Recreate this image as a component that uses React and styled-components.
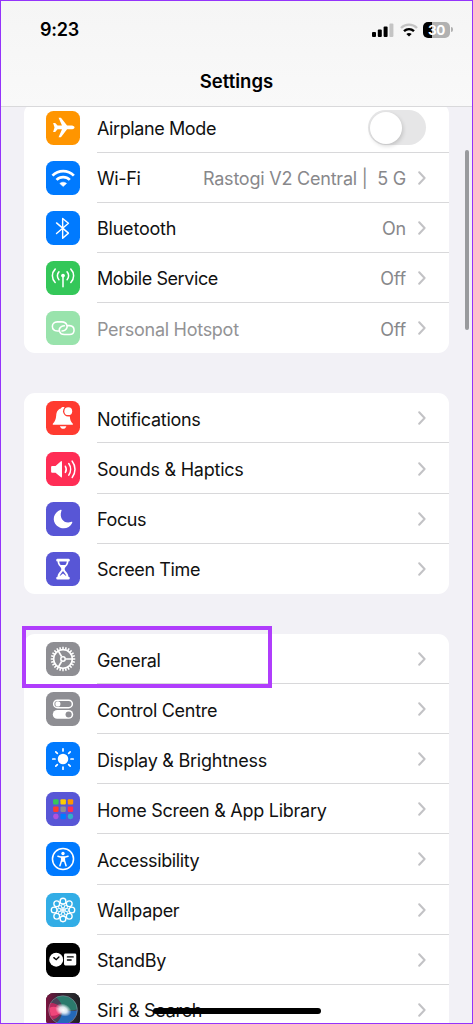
import React from 'react';
import styled, { createGlobalStyle } from 'styled-components';

const polar = (angle, radius, cx = 50, cy = 50) => {
  const a = (angle * Math.PI) / 180;
  return [cx + radius * Math.cos(a), cy + radius * Math.sin(a)];
};

const Ray = ({ angle, from, to, ...rest }) => {
  const [x1, y1] = polar(angle, from);
  const [x2, y2] = polar(angle, to);
  return <line x1={x1} y1={y1} x2={x2} y2={y2} {...rest} />;
};

const range = (n) => Array.from({ length: n }, (_, i) => i);

const icons = {
  airplane: (
    <path
      fill='#fff'
      d='M84 48.500C84 52 78 54 73 54H62L44 77H37L47 54H34L27 62H21L25 48.500L21 35H27L34 43H47L37 20H44L62 43H73C78 43 84 45 84 48.500Z'
    />
  ),
  wifi: (
    <g fill='none' stroke='#fff' strokeWidth='8'>
      <path d='M19 43C37 25 64 25 82 43' />
      <path d='M31 55.500C42 44.500 59 44.500 70 55.500' />
      <path
        d='M50.500 75L40.500 66C46 61 55 61 60.500 66Z'
        fill='#fff'
        stroke='#fff'
        strokeWidth='1.500'
      />
    </g>
  ),
  bluetooth: (
    <path
      d='M31 35L66 65L49 80V22L66 36L31 66'
      fill='none'
      stroke='#fff'
      strokeWidth='4.200'
      strokeLinejoin='round'
      strokeLinecap='round'
    />
  ),
  mobile: (
    <g fill='none' stroke='#fff' strokeWidth='4.500' strokeLinecap='round'>
      <circle cx='50' cy='43' r='5.500' fill='#fff' stroke='none' />
      <path d='M50 45V76' />
      <path d='M38 32C32 38 32 49 38 55M62 32C68 38 68 49 62 55' />
      <path d='M27 24C16 35 16 52 27 63M73 24C84 35 84 52 73 63' />
    </g>
  ),
  hotspot: (
    <g fill='none' stroke='#fff' strokeWidth='4.500' strokeLinecap='round'>
      <path d='M38 59H33C14 58 14 32 33 32H47C62 32 67 49 56 56C53 58 50 58.500 47 58.500' />
      <path d='M63 43H69C87 44 87 69 69 69H54C39 69 34 53 45 46C48 44 51 43.500 54 43.500' />
    </g>
  ),
  bell: (
    <g fill='#fff'>
      <path d='M20 70V67C27 60 29 54 30 43C31 30 36 24 44 22C45 17 54 16 56 21L60 43L70 45C71 56 73 61 79 67V70Z' />
      <path d='M41 74H60C57 84 44 84 41 74Z' />
      <circle cx='65.500' cy='30' r='15.500' fill='#ff3b30' />
      <circle cx='65.500' cy='30' r='11.500' />
    </g>
  ),
  sound: (
    <g fill='none' stroke='#fff' strokeWidth='4.500' strokeLinecap='round'>
      <path
        d='M18 41H28L44 27Q47 26 47 30V72Q47 76 44 74L28 61H18Q15 61 15 58V44Q15 41 18 41Z'
        fill='#fff'
        stroke='none'
      />
      <path d='M57 42C60 47 60 55 57 60' />
      <path d='M67 34C74 44 74 58 67 68' />
      <path d='M77 27C88 41 88 61 77 75' />
    </g>
  ),
  moon: (
    <path
      fill='#fff'
      d='M43 23C47 22 46 25 45 27C38 48 54 65 73 59C77 57 78 59 77 62C69 80 46 82 32 70C16 55 22 31 43 23Z'
    />
  ),
  hourglass: (
    <g>
      <path
        fill='#fff'
        d='M34 20H66Q70 20 70 24V25Q70 28 66 28C66 40 55 44 55 50.500C55 57 66 61 66 73Q70 73 70 77Q70 81 66 81H34Q30 81 30 77Q30 73 34 73C34 61 45 57 45 50.500C45 44 34 40 34 28Q30 28 30 24Q30 20 34 20Z'
      />
      <path
        fill='#5856d6'
        d='M39 28H61C61 33 59 35 57 38H43C41 35 39 33 39 28ZM50 56C54 62 58 65 60 71L50 63L40 71C42 65 46 62 50 56Z'
      />
    </g>
  ),
  gear: (
    <g stroke='#fff' fill='none'>
      {range(24).map((i) => (
        <Ray key={i} angle={i * 15} from={28} to={36} strokeWidth='4.500' />
      ))}
      <circle cx='50' cy='50' r='27.500' strokeWidth='5' />
      <circle cx='50' cy='50' r='6.500' strokeWidth='4.500' />
      {[0, 120, 240].map((angle) => (
        <Ray key={angle} angle={angle} from={8} to={28} strokeWidth='5' />
      ))}
    </g>
  ),
  toggles: (
    <g fill='#fff'>
      <rect
        x='22.500'
        y='24'
        width='55'
        height='22'
        rx='11'
        fill='none'
        stroke='#fff'
        strokeWidth='4.500'
      />
      <circle cx='35' cy='35' r='7.500' />
      <rect x='20' y='53' width='60' height='26' rx='13' />
      <circle cx='66.500' cy='66' r='9' fill='#8e8e93' />
    </g>
  ),
  sun: (
    <g stroke='#fff' strokeWidth='5' strokeLinecap='round'>
      <circle cx='50' cy='50' r='15.500' fill='#fff' stroke='none' />
      {range(8).map((i) => (
        <Ray key={i} angle={i * 45} from={23.5} to={30} />
      ))}
    </g>
  ),
  grid: (
    <g>
      {[
        '#34c759',
        '#ffcc00',
        '#ff9500',
        '#ff3b30',
        '#8e8e93',
        '#ff2d55',
        '#af52de',
        '#007aff',
        '#30b0c7',
      ].map((color, i) => (
        <rect
          key={color}
          x={21 + (i % 3) * 21.5}
          y={21 + Math.floor(i / 3) * 21.5}
          width='16'
          height='16'
          rx={i === 6 || i === 8 ? 7 : 3}
          fill={color}
        />
      ))}
    </g>
  ),
  person: (
    <g fill='none' stroke='#fff' strokeLinecap='round' strokeLinejoin='round'>
      <circle cx='50' cy='50' r='31' strokeWidth='4.500' />
      <circle cx='50' cy='34' r='5' fill='#fff' stroke='none' />
      <path d='M35 42L46 44.500H54L65 42' strokeWidth='4.500' />
      <path d='M46 45V54L41 70M54 45V54L59 70' strokeWidth='4.500' />
      <path d='M47 45H53V57H47Z' fill='#fff' strokeWidth='2' />
    </g>
  ),
  flower: (
    <g fill='none' stroke='#fff' strokeWidth='4'>
      {range(8).map((i) => {
        const [cx, cy] = polar(i * 45, 26);
        return <circle key={i} cx={cx} cy={cy} r='8.500' />;
      })}
      {range(8).map((i) => (
        <ellipse
          key={i}
          cx='60'
          cy='50'
          rx='8'
          ry='4.500'
          strokeWidth='2.500'
          transform={`rotate(${i * 45} 50 50)`}
        />
      ))}
    </g>
  ),
  standby: (
    <g fill='#fff'>
      <circle cx='30' cy='49' r='20.500' />
      <rect x='53' y='31' width='36' height='35' rx='4' />
      <g fill='none' stroke='#000' strokeWidth='4' strokeLinecap='round'>
        <path d='M23 43L30 49L38 41' />
        <path d='M63 41H80M63 50H74' />
      </g>
    </g>
  ),
  siri: (
    <g>
      <defs>
        <radialGradient id='glow'>
          <stop offset='0' stopColor='#fff' />
          <stop offset='0.450' stopColor='#eef5fb' stopOpacity='0.900' />
          <stop offset='1' stopColor='#fff' stopOpacity='0' />
        </radialGradient>
        <linearGradient id='edge' x2='1' y2='0'>
          <stop offset='0' stopColor='#7c1440' />
          <stop offset='0.400' stopColor='#3b2033' />
          <stop offset='0.700' stopColor='#2c2c30' />
          <stop offset='1' stopColor='#1f1f24' />
        </linearGradient>
        <clipPath id='orb'>
          <circle cx='50' cy='50' r='43' />
        </clipPath>
      </defs>
      <rect width='100' height='100' fill='url(#edge)' />
      <g clipPath='url(#orb)'>
        <rect width='100' height='100' fill='#4a4258' />
        <path d='M0 30C20 25 42 36 50 50C38 74 18 84 0 80Z' fill='#b52a5e' />
        <path d='M28 12C60 0 92 20 94 48C76 54 62 52 50 48C46 30 40 22 28 12Z' fill='#2b7a6c' />
        <path d='M50 50C70 52 82 56 94 50C90 78 60 100 28 90C42 80 46 66 50 50Z' fill='#2468b8' />
        <path d='M10 44C24 36 36 44 50 52C38 64 24 70 14 66Z' fill='#f0467a' />
      </g>
      <circle cx='50' cy='50' r='42' fill='none' stroke='#9aa5ad' strokeOpacity='0.500' strokeWidth='2.500' />
      <ellipse cx='51' cy='50' rx='25' ry='18' fill='url(#glow)' transform='rotate(25 51 50)' />
    </g>
  ),
};

const groups = [
  [
    { label: 'Airplane Mode', icon: 'airplane', color: '#ff9500', track: -0.4, toggle: true },
    {
      label: 'Wi-Fi',
      icon: 'wifi',
      color: '#007aff',
      track: -0.4,
      value: 'Rastogi V2 Central |  5 G',
    },
    { label: 'Bluetooth', icon: 'bluetooth', color: '#007aff', track: -0.22, value: 'On' },
    { label: 'Mobile Service', icon: 'mobile', color: '#34c759', track: -0.42, value: 'Off' },
    {
      label: 'Personal Hotspot',
      icon: 'hotspot',
      color: '#99e3ac',
      track: -0.28,
      value: 'Off',
      disabled: true,
    },
  ],
  [
    { label: 'Notifications', icon: 'bell', color: '#ff3b30', track: -0.3 },
    { label: 'Sounds & Haptics', icon: 'sound', color: '#ff2d55', track: -0.24 },
    { label: 'Focus', icon: 'moon', color: '#5856d6', track: -0.4 },
    { label: 'Screen Time', icon: 'hourglass', color: '#5856d6', track: -0.38 },
  ],
  [
    { label: 'General', icon: 'gear', color: '#8e8e93', track: -0.4, marked: true },
    { label: 'Control Centre', icon: 'toggles', color: '#8e8e93', track: -0.3 },
    { label: 'Display & Brightness', icon: 'sun', color: '#007aff', track: -0.24 },
    { label: 'Home Screen & App Library', icon: 'grid', color: '#5856d6', track: -0.27 },
    { label: 'Accessibility', icon: 'person', color: '#007aff', track: -0.38 },
    { label: 'Wallpaper', icon: 'flower', color: '#32ade6', track: -0.33 },
    { label: 'StandBy', icon: 'standby', color: '#000', track: -0.3 },
    { label: 'Siri & Search', icon: 'siri', color: '#222', track: -0.28 },
  ],
];

const SettingsRow = ({ item }) => (
  <Row>
    <IconTile color={item.color}>
      <svg viewBox='0 0 100 100'>{icons[item.icon]}</svg>
    </IconTile>
    <RowBody>
      <Label $disabled={item.disabled} $track={item.track}>
        {item.label}
      </Label>
      {item.value && <Value>{item.value}</Value>}
      {item.toggle ? (
        <Switch role='switch' aria-checked='false'>
          <Knob />
        </Switch>
      ) : (
        <Chevron viewBox='0 0 8 14'>
          <path d='M1.200 1.200L6.600 7L1.200 12.800' />
        </Chevron>
      )}
    </RowBody>
    {item.marked && <Marker />}
  </Row>
);

const App = () => {
  return (
    <Screen>
      <GlobalStyle />
      <Header>
        <StatusBar>
          <Time>9:23</Time>
          <StatusIcons>
            <svg width='22' height='14' viewBox='0 0 22 14'>
              <rect x='0' y='9' width='4' height='5' rx='1' />
              <rect x='5.800' y='6.500' width='4' height='7.500' rx='1' />
              <rect x='11.600' y='3.500' width='4' height='10.500' rx='1' />
              <rect x='17.400' y='0.500' width='4' height='13.500' rx='1' fill='#c4c4c4' />
            </svg>
            <svg width='18' height='14' viewBox='0 0 18 14' fill='none' strokeWidth='2.400'>
              <path d='M1 5C5.500 0.500 12.500 0.500 17 5' stroke='#c4c4c4' />
              <path d='M4 8.200C7 5.400 11 5.400 14 8.200' stroke='#000' />
              <path d='M9 13.500L6.300 10.900C7.800 9.700 10.200 9.700 11.700 10.900Z' fill='#000' />
            </svg>
            <Battery>
              <Charge>30</Charge>
              <Nub />
            </Battery>
          </StatusIcons>
        </StatusBar>
        <Title>Settings</Title>
      </Header>
      <List>
        {groups.map((group, i) => (
          <Group key={i}>
            {group.map((item) => (
              <SettingsRow key={item.label} item={item} />
            ))}
          </Group>
        ))}
      </List>
      <ScrollThumb />
      <HomeIndicator />
    </Screen>
  );
};

const GlobalStyle = createGlobalStyle`
  * {
    box-sizing: border-box;
  }
  body {
    margin: 0;
    font-family: Inter, 'Liberation Sans', sans-serif;
  }
`;

const Screen = styled.div`
  position: relative;
  display: flex;
  flex-direction: column;
  height: 1024px;
  border: 1px solid #9433fb;
  background: #f2f1f6;
  overflow: hidden;
`;

const Header = styled.header`
  position: relative;
  z-index: 1;
  flex: none;
  height: 106px;
  border-bottom: 1px solid #d9d9db;
  background: linear-gradient(#f5f5f5, #f9f9f9);
`;

const StatusBar = styled.div`
  display: flex;
  justify-content: space-between;
  align-items: center;
  height: 57px;
  padding: 0 19px 0 39px;
`;

const Time = styled.span`
  font-size: 18px;
  font-weight: 600;
  letter-spacing: -0.2px;
`;

const StatusIcons = styled.div`
  display: flex;
  align-items: center;
  gap: 5.5px;
`;

const Battery = styled.div`
  display: flex;
  align-items: center;
  gap: 1px;
`;

const Charge = styled.span`
  width: 27px;
  height: 16px;
  border-radius: 5px;
  background: linear-gradient(90deg, #000 32%, #b1b1b1 32%);
  color: #fff;
  font-size: 13.5px;
  font-weight: 700;
  letter-spacing: -0.3px;
  line-height: 16px;
  text-align: center;
`;

const Nub = styled.span`
  width: 2px;
  height: 5px;
  border-radius: 0 2px 2px 0;
  background: #b1b1b1;
`;

const Title = styled.h1`
  margin: 11px 0 0;
  font-size: 18.5px;
  font-weight: 600;
  line-height: 24px;
  text-align: center;
`;

const List = styled.main`
  display: flex;
  flex-direction: column;
  flex: none;
  gap: 40.2px;
  margin-top: -4.4px;
  padding: 0 23px;
`;

const Group = styled.section`
  border-radius: 11px;
  background: #fff;
`;

const Row = styled.div`
  position: relative;
  display: flex;
  align-items: center;
  gap: 17px;
  height: 50.12px;
  padding-left: 22px;
`;

const IconTile = styled.div`
  flex: none;
  width: 34px;
  height: 34px;
  border-radius: 7.5px;
  background: ${(props) => props.color};
  overflow: hidden;

  svg {
    display: block;
    width: 100%;
    height: 100%;
  }
`;

const RowBody = styled.div`
  display: flex;
  align-items: center;
  flex: 1;
  height: 100%;
  padding: 1px 23px 0 0;
  border-bottom: 1px solid #d8d8da;

  ${Row}:last-child & {
    border-bottom-color: transparent;
  }
`;

const Label = styled.span`
  flex: 1;
  padding-top: 2px;
  color: ${(props) => (props.$disabled ? '#939395' : '#111')};
  font-size: 18px;
  letter-spacing: ${(props) => props.$track || 0}px;
  white-space: nowrap;
`;

const Value = styled.span`
  margin-right: 12px;
  padding-top: 2px;
  color: #88888b;
  font-size: 18px;
  letter-spacing: -0.22px;
  white-space: pre;
`;

const Chevron = styled.svg`
  width: 8px;
  height: 14px;
  fill: none;
  stroke: #c2c2c5;
  stroke-width: 2;
  stroke-linecap: round;
  stroke-linejoin: round;
`;

const Switch = styled.div`
  width: 58px;
  height: 35px;
  padding: 1.5px;
  border-radius: 18px;
  background: #e6e6e7;
`;

const Knob = styled.div`
  width: 32px;
  height: 32px;
  border-radius: 50%;
  background: #fff;
  box-shadow: 1px 2px 4px rgba(0, 0, 0, 0.16);
`;

// purple frame drawn over the highlighted row
const Marker = styled.div`
  position: absolute;
  top: -8px;
  left: -2px;
  width: 250px;
  height: 62px;
  border: 4px solid #b03dfc;
`;

const ScrollThumb = styled.div`
  position: absolute;
  top: 149px;
  right: 3px;
  width: 4px;
  height: 180px;
  border-radius: 2px;
  background: #999a9d;
`;

const HomeIndicator = styled.div`
  position: absolute;
  bottom: 9px;
  left: 152px;
  width: 168px;
  height: 6px;
  border-radius: 3px;
  background: #000;
`;

export default App;
